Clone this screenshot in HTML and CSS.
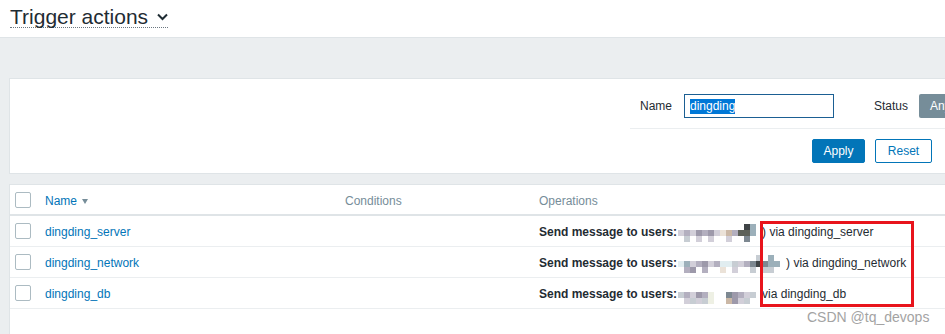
FILE: index.html
```html
<!DOCTYPE html>
<html>
<head>
<meta charset="utf-8">
<link rel="stylesheet" href="styles.css">
</head>
<body>
<div class="page">
  <header class="header">
    <h1 class="title"><span class="title-text">Trigger actions</span><svg class="chev" width="11" height="8" viewBox="0 0 11 8"><polyline points="1,1.5 5.5,6 10,1.5" fill="none" stroke="#1f2c33" stroke-width="2"/></svg></h1>
  </header>
  <main class="main">
    <section class="filter">
      <div class="filter-form">
        <div class="fields">
          <span class="lbl lbl-name">Name</span>
          <div class="input"><span class="sel">dingding</span></div>
          <span class="lbl lbl-status">Status</span>
          <span class="seg">Any</span>
          <span class="seg seg-light">Enabled</span>
        </div>
        <div class="buttons">
          <button class="btn btn-apply">Apply</button>
          <button class="btn btn-reset">Reset</button>
        </div>
      </div>
    </section>
    <section class="table">
      <div class="row head">
        <div class="cb-cell"><span class="cb"></span></div>
        <div class="name-h">Name<span class="tri"></span></div>
        <div class="gray">Conditions</div>
        <div class="gray">Operations</div>
      </div>
      <div class="row">
        <div class="cb-cell"><span class="cb"></span></div>
        <div class="link">dingding_server</div>
        <div></div>
        <div class="ops"><b>Send message to users:</b><span class="mosaic m14">
          <i></i><i></i><i></i><i></i><i></i><i></i><i></i><i></i><i></i><i></i><i></i><i class="g"></i><i class="h"></i><i></i>
          <i class="a"></i><i class="b"></i><i class="a"></i><i class="c"></i><i class="b"></i><i class="c"></i><i class="a"></i><i class="d"></i><i class="e"></i><i class="b"></i><i class="f"></i><i class="f"></i><i class="h"></i><i></i>
          <i></i><i class="j"></i><i></i><i class="a"></i><i></i><i class="a"></i><i></i><i></i><i class="a"></i><i></i><i></i><i class="k"></i><i></i><i></i>
        </span><span class="rest">) via dingding_server</span></div>
      </div>
      <div class="row">
        <div class="cb-cell"><span class="cb"></span></div>
        <div class="link">dingding_network</div>
        <div></div>
        <div class="ops"><b>Send message to users:</b><span class="mosaic m18">
          <i></i><i></i><i></i><i></i><i></i><i></i><i></i><i></i><i></i><i></i><i></i><i></i><i></i><i class="j"></i><i></i><i class="h"></i><i></i><i></i>
          <i class="i"></i><i class="h"></i><i class="a"></i><i class="b"></i><i class="c"></i><i class="a"></i><i class="b"></i><i class="i"></i><i class="i"></i><i class="j"></i><i class="a"></i><i class="b"></i><i class="k"></i><i class="g"></i><i class="k"></i><i class="h"></i><i class="h"></i><i></i>
          <i></i><i class="b"></i><i class="c"></i><i></i><i class="b"></i><i></i><i></i><i class="d"></i><i></i><i class="a"></i><i></i><i></i><i class="j"></i><i></i><i class="j"></i><i class="j"></i><i></i><i></i>
        </span><span class="rest">) via dingding_network</span></div>
      </div>
      <div class="row">
        <div class="cb-cell"><span class="cb"></span></div>
        <div class="link">dingding_db</div>
        <div></div>
        <div class="ops"><b>Send message to users:</b><span class="mosaic m14">
          <i></i><i></i><i></i><i></i><i></i><i></i><i></i><i></i><i></i><i></i><i></i><i></i><i></i><i></i>
          <i class="j"></i><i class="b"></i><i class="a"></i><i class="c"></i><i class="b"></i><i class="l"></i><i></i><i></i><i class="k"></i><i class="c"></i><i class="b"></i><i class="a"></i><i class="j"></i><i></i>
          <i></i><i class="a"></i><i class="j"></i><i class="a"></i><i class="j"></i><i class="l"></i><i></i><i></i><i class="e"></i><i class="c"></i><i class="a"></i><i class="j"></i><i></i><i></i>
        </span><span class="rest">via dingding_db</span></div>
      </div>
    </section>
  </main>
  <div class="redbox"></div>
  <div class="watermark">CSDN @tq_devops</div>
</div>
</body>
</html>
```

FILE: styles.css
```css
html, body {
  margin: 0;
  padding: 0;
  overflow: hidden;
}
body {
  background: #ebeef0;
  font-family: "Liberation Sans", Arial, sans-serif;
  font-size: 12px;
  color: #1f2c33;
}
.page {
  position: relative;
  width: 1130px;
  height: 334px;
  overflow: hidden;
}
.header {
  height: 37px;
  background: #fff;
  border-bottom: 1px solid #dfe4e7;
  padding-left: 10px;
}
.title {
  margin: 0;
  padding-top: 6px;
  display: inline-flex;
  align-items: center;
  font-size: 21px;
  font-weight: normal;
  line-height: 21px;
  color: #1f2c33;
  border-bottom: 1px dotted #6b7780;
}
.chev {
  margin-left: 9px;
  margin-top: 1px;
}
.main {
  padding: 40px 0 0 9px;
}
.filter {
  width: 1100px;
  background: #fff;
  border: 1px solid #dfe4e7;
}
.filter-form {
  margin-left: 620px;
  width: 484px;
}
.fields {
  display: flex;
  align-items: center;
  padding: 15px 0 10px 10px;
  border-bottom: 1px solid #ebeef0;
}
.lbl {
  white-space: nowrap;
}
.lbl-name {
  width: 44px;
}
.input {
  box-sizing: border-box;
  width: 150px;
  height: 24px;
  border: 1px solid #1b5f93;
  padding-left: 5px;
  display: flex;
  align-items: center;
}
.sel {
  background: #0078d7;
  color: #fff;
  line-height: 15px;
  margin-top: 1px;
}
.lbl-status {
  margin-left: 40px;
  width: 45px;
}
.seg {
  box-sizing: border-box;
  height: 24px;
  line-height: 24px;
  padding: 0 11px;
  background: #768d99;
  color: #fff;
  border-radius: 2px 0 0 2px;
  white-space: nowrap;
}
.seg-light {
  background: #fff;
  color: #1f2c33;
  border: 1px solid #dfe4e7;
  line-height: 22px;
  border-radius: 0;
}
.buttons {
  display: flex;
  justify-content: center;
  gap: 10px;
  padding: 10px 0 10px;
}
.btn {
  box-sizing: border-box;
  height: 24px;
  border: 1px solid #0275b8;
  border-radius: 2px;
  font-family: "Liberation Sans", Arial, sans-serif;
  font-size: 12px;
  padding: 0;
  margin: 0;
}
.btn-apply {
  width: 53px;
  background: #0275b8;
  color: #fff;
}
.btn-reset {
  width: 57px;
  background: #fff;
  color: #0275b8;
}
.table {
  margin-top: 10px;
  width: 1100px;
  background: #fff;
  border: 1px solid #dfe4e7;
  border-bottom: none;
  height: 149px;
}
.row {
  display: grid;
  grid-template-columns: 35px 300px 194px 1fr;
  align-items: center;
  height: 30px;
  border-bottom: 1px solid #ebeef0;
}
.row.head {
  height: 29px;
  border-bottom: 2px solid #dfe4e7;
}
.cb-cell {
  padding-left: 5px;
  display: flex;
  align-items: center;
}
.cb {
  box-sizing: border-box;
  width: 16px;
  height: 16px;
  border: 1px solid #acbbc2;
  border-radius: 2px;
  background: #fff;
}
.name-h {
  color: #0275b8;
  display: flex;
  align-items: center;
  margin-top: 3px;
}
.tri {
  width: 0;
  height: 0;
  border-left: 3.5px solid transparent;
  border-right: 3.5px solid transparent;
  border-top: 5px solid #768d99;
  margin-left: 5px;
  margin-top: 1px;
}
.gray {
  color: #768d99;
  margin-top: 3px;
}
.link {
  color: #0275b8;
  margin-top: 2px;
}
.ops {
  display: flex;
  align-items: center;
  white-space: nowrap;
  margin-top: 2px;
}
.ops b {
  font-weight: bold;
}
.mosaic {
  display: grid;
  grid-template-rows: repeat(3, 6px);
  margin-left: 1px;
  margin-top: 2px;
}
.m14 { grid-template-columns: repeat(14, 6px); }
.m18 { grid-template-columns: repeat(18, 6px); }
.mosaic i { display: block; }
.mosaic .a { background: #d2cfd9; }
.mosaic .b { background: #b3afbf; }
.mosaic .c { background: #9d99aa; }
.mosaic .d { background: #ebe2d8; }
.mosaic .e { background: #cbb8a6; }
.mosaic .f { background: #5d6159; }
.mosaic .g { background: #3f4446; }
.mosaic .h { background: #9cb0ba; }
.mosaic .i { background: #e1edf0; }
.mosaic .j { background: #c7cdd3; }
.mosaic .k { background: #7d8891; }
.mosaic .l { background: #eef0e4; }
.redbox {
  position: absolute;
  left: 760px;
  top: 221px;
  width: 148px;
  height: 80px;
  border: 3px solid #e8141c;
}
.watermark {
  position: absolute;
  left: 807px;
  top: 309px;
  font-size: 14px;
  line-height: 16px;
  color: #a3a3a3;
  white-space: nowrap;
}
```
